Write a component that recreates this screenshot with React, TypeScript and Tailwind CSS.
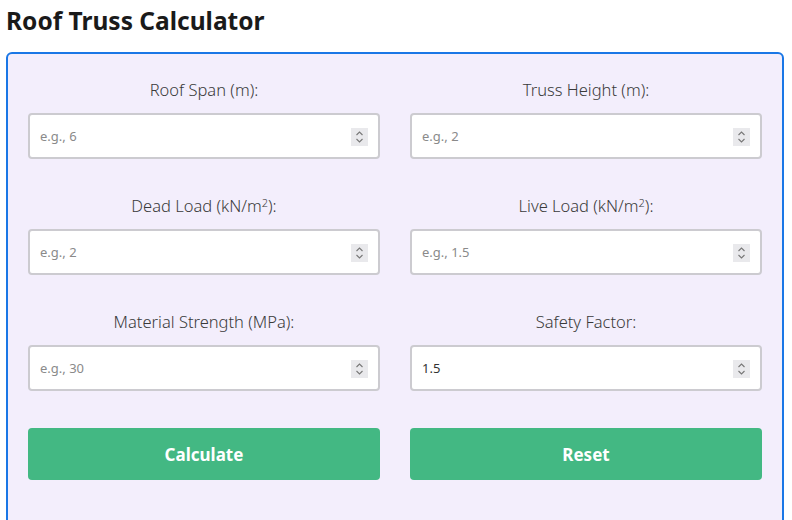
import React from "react";

const font = { fontFamily: '"Noto Sans", "Open Sans", sans-serif' };

function Spinner() {
  return (
    <span className="flex h-[18px] w-[17px] shrink-0 items-center justify-center bg-[#e9e9ec]">
      <svg width="9" height="14" viewBox="0 0 9 14" fill="none" stroke="#777" strokeWidth="1.1">
        <path d="M1.5 5 L4.5 2 L7.5 5" />
        <path d="M1.5 9 L4.5 12 L7.5 9" />
      </svg>
    </span>
  );
}

function Field({ label, placeholder, value }: { label: React.ReactNode; placeholder: string; value?: string }) {
  return (
    <div className="flex flex-col">
      <div className="h-[24px] text-center text-[16.5px] leading-[24px] font-light text-[#3a3a3a]">{label}</div>
      <div className="mt-[11px] flex h-[46px] items-center rounded-[4px] border-2 border-[#cccbd0] bg-white pl-[10px] pr-[10px] pt-[2px]">
        <span className={"flex-1 text-[13px] " + (value ? "text-[#333]" : "text-[#8a8a8a]")}>
          {value ?? placeholder}
        </span>
        <Spinner />
      </div>
    </div>
  );
}

export default function App() {
  return (
    <div className="min-h-[520px] bg-white pl-[6px] pr-[8px] pt-[6px]" style={font}>
      <h1 className="text-[24.5px] font-bold leading-[30px] text-[#1a1a1a]">Roof Truss Calculator</h1>
      <div className="mt-[16px] h-[480px] rounded-[6px] border-2 border-[#1a77e6] bg-[#f3eefc] pl-[20px] pr-[20px] pt-[24px]">
        <div className="grid grid-cols-2 gap-x-[30px] gap-y-[35px]">
          <Field label="Roof Span (m):" placeholder="e.g., 6" />
          <Field label="Truss Height (m):" placeholder="e.g., 2" />
          <Field label={<>Dead Load (kN/m<sup className="text-[11px]">2</sup>):</>} placeholder="e.g., 2" />
          <Field label={<>Live Load (kN/m<sup className="text-[11px]">2</sup>):</>} placeholder="e.g., 1.5" />
          <Field label="Material Strength (MPa):" placeholder="e.g., 30" />
          <Field label="Safety Factor:" placeholder="" value="1.5" />
        </div>
        <div className="mt-[37px] grid grid-cols-2 gap-x-[30px]">
          <button className="h-[52px] rounded-[4px] bg-[#43b883] pt-[1px] text-[17px] font-bold text-white">Calculate</button>
          <button className="h-[52px] rounded-[4px] bg-[#43b883] pt-[1px] text-[17px] font-bold text-white">Reset</button>
        </div>
      </div>
    </div>
  );
}
